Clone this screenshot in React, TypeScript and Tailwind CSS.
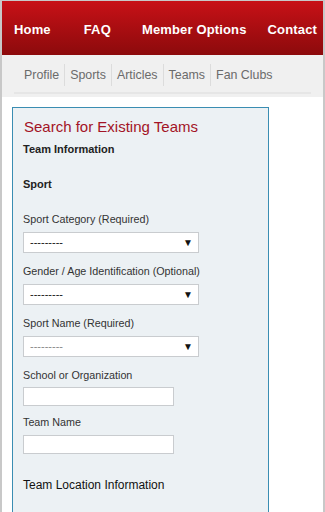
import React from "react";

const subNav = ["Profile", "Sports", "Articles", "Teams", "Fan Clubs"];

function FakeSelect({ muted = false }: { muted?: boolean }) {
    return (
        <div className="mt-[6px] flex h-[21px] w-[176px] items-center justify-between border border-[#c9cccf] bg-white pl-[6px] pr-[5px]">
            <span className={`text-[11px] leading-none ${muted ? "text-[#888]" : "text-[#111]"}`}>---------</span>
            <span className="text-[10px] leading-none text-[#111]">▼</span>
        </div>
    );
}

function FakeInput() {
    return <div className="h-[19px] w-[151px] border border-[#c9cccf] bg-white" />;
}

export default function App() {
    return (
        <div
            className="h-[512px] w-[325px] overflow-hidden border-x-2 border-t border-[#c8c8c8] bg-white"
            style={{ fontFamily: '"Liberation Sans", Arial, sans-serif' }}
        >
            {/* top nav */}
            <div className="flex h-[54px] items-center bg-gradient-to-b from-[#c81117] to-[#8c0a0c] pl-[12px] pt-[4px] text-[13px] font-bold tracking-[0.15px] text-white">
                <span>Home</span>
                <span className="ml-[33px]">FAQ</span>
                <span className="ml-[31px]">Member Options</span>
                <span className="ml-[21px]">Contact</span>
            </div>

            {/* sub nav */}
            <div className="h-[42px] bg-[#f0f0f0] px-[12px] pt-[9px]">
                <div className="flex h-[30px] items-start border-b-2 border-[#e6e6e6] pl-[10px] text-[12.4px] text-[#6b6b6b]">
                    {subNav.map((item, i) => (
                        <span
                            key={item}
                            className={`flex h-[22px] items-center ${i > 0 ? "border-l border-[#dcdcdc] pl-[5px]" : ""} pr-[5px]`}
                        >
                            {item}
                        </span>
                    ))}
                </div>
            </div>

            {/* search panel */}
            <div className="ml-[10px] mt-[10px] h-[420px] w-[257px] border border-[#3a8db2] bg-[#ecf1f4] pl-[10px] pt-[9px]">
                <div className="pl-px text-[15px] leading-[20px] text-[#a31426]">Search for Existing Teams</div>
                <div className="mt-[5px] text-[11px] font-bold leading-[14px] text-[#222]">Team Information</div>
                <div className="mt-[21px] text-[11px] font-bold leading-[14px] text-[#222]">Sport</div>

                <div className="mt-[21px] text-[10.75px] leading-[14px] text-[#333]">Sport Category (Required)</div>
                <FakeSelect />

                <div className="mt-[11px] text-[10.75px] leading-[14px] text-[#333]">Gender / Age Identification (Optional)</div>
                <FakeSelect />

                <div className="mt-[11px] text-[10.75px] leading-[14px] text-[#333]">Sport Name (Required)</div>
                <FakeSelect muted />

                <div className="mt-[11px] text-[10.75px] leading-[14px] text-[#333]">School or Organization</div>
                <div className="mt-[5px]">
                    <FakeInput />
                </div>

                <div className="mt-[9px] text-[10.75px] leading-[14px] text-[#333]">Team Name</div>
                <div className="mt-[6px]">
                    <FakeInput />
                </div>

                <div className="mt-[23px] text-[12px] leading-[16px] text-[#111]">Team Location Information</div>
            </div>
        </div>
    );
}
